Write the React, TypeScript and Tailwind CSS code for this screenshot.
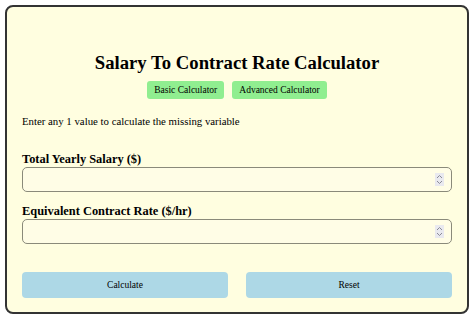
import React from "react";

const Spinner = () => (
    <div className="w-[9px] h-[13px] bg-[#e9e9ef] flex items-center justify-center">
        <svg width="7" height="11" viewBox="0 0 7 11" fill="none" stroke="#8a8a96" strokeWidth="1">
            <path d="M1 4 L3.5 1.5 L6 4" />
            <path d="M1 7 L3.5 9.5 L6 7" />
        </svg>
    </div>
);

const Field = ({ label }: { label: string }) => (
    <div className="flex flex-col">
        <label className="text-[12.4px] font-bold leading-[16px] text-black">{label}</label>
        <div className="h-[25px] border border-[#8a8a7a] rounded-[5px] bg-[#fffde6] flex items-center justify-end pr-[7px]">
            <Spinner />
        </div>
    </div>
);

export default function App() {
    return (
        <div className="w-[474px] h-[319px] bg-white p-[5px] font-['Liberation_Serif','Times_New_Roman',serif]">
            <div className="h-full border-2 border-[#333] rounded-[8px] bg-[#fffee0] px-[15px] pt-[44px] flex flex-col">
                <h1 className="text-center text-[18.7px] font-bold leading-[24px] text-black">
                    Salary To Contract Rate Calculator
                </h1>
                <div className="flex justify-center gap-[8px] mt-[6px]">
                    <button className="h-[18px] px-[7px] rounded-[3px] bg-[#90ee90] text-[9.5px] text-black">Basic Calculator</button>
                    <button className="h-[18px] px-[7px] rounded-[3px] bg-[#90ee90] text-[9.5px] text-black">Advanced Calculator</button>
                </div>
                <p className="text-[10.8px] leading-[14px] text-black mt-[15px]">Enter any 1 value to calculate the missing variable</p>
                <div className="mt-[23px] flex flex-col gap-[11px]">
                    <Field label="Total Yearly Salary ($)" />
                    <Field label="Equivalent Contract Rate ($/hr)" />
                </div>
                <div className="flex gap-[18px] mt-[28px]">
                    <button className="flex-1 h-[26px] rounded-[4px] bg-[#add8e6] text-[9.5px] text-black">Calculate</button>
                    <button className="flex-1 h-[26px] rounded-[4px] bg-[#add8e6] text-[9.5px] text-black">Reset</button>
                </div>
            </div>
        </div>
    );
}
